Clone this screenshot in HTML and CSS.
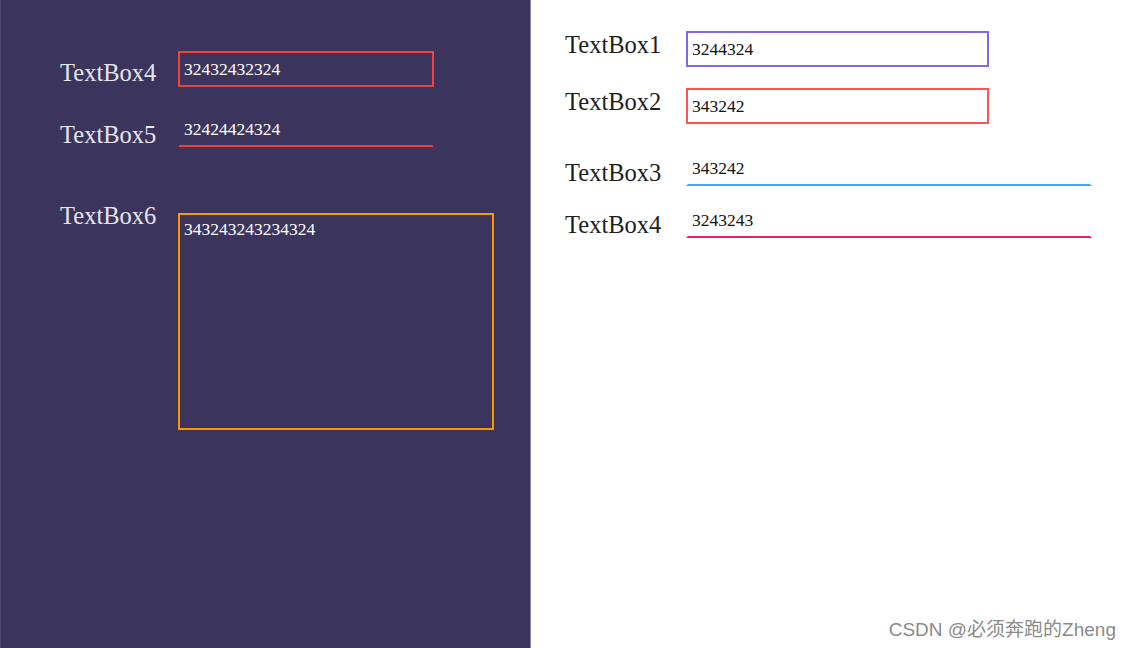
FILE: index.html
```html
<!DOCTYPE html>
<html lang="zh-CN">
<head>
  <meta charset="UTF-8">
  <meta name="viewport" content="width=device-width, initial-scale=1.0">
  <title>TextBox</title>
  <link rel="stylesheet" href="styles.css">
</head>
<body>
  <div class="page">

    <!-- 深色面板 -->
    <div class="panel dark">
      <div class="row row-a">
        <span class="label">TextBox4</span>
        <input class="field box red" type="text" value="32432432324">
      </div>
      <div class="row row-b">
        <span class="label">TextBox5</span>
        <input class="field line red" type="text" value="32424424324">
      </div>
      <div class="row row-c">
        <span class="label">TextBox6</span>
        <textarea class="field area orange">343243243234324</textarea>
      </div>
    </div>

    <!-- 白色面板 -->
    <div class="panel light">
      <div class="row row-1">
        <span class="label">TextBox1</span>
        <input class="field box purple" type="text" value="3244324">
      </div>
      <div class="row row-2">
        <span class="label">TextBox2</span>
        <input class="field box coral" type="text" value="343242">
      </div>
      <div class="row row-3">
        <span class="label">TextBox3</span>
        <input class="field line wide blue" type="text" value="343242">
      </div>
      <div class="row row-4">
        <span class="label">TextBox4</span>
        <input class="field line wide pink" type="text" value="3243243">
      </div>
    </div>

    <div class="watermark">CSDN @必须奔跑的Zheng</div>
  </div>
</body>
</html>
```

FILE: styles.css
```css
body {
  margin: 0;
  background: #fff;
  font-family: "Liberation Serif", "Noto Sans CJK SC", serif;
}

.page {
  position: relative;
  display: flex;
  height: 648px;
  overflow: hidden;
}

.panel {
  box-sizing: border-box;
}

.dark {
  width: 531px;
  flex: none;
  background: #3b355d;
  border-left: 1px solid #4d4770;
  border-right: 1px solid #8d89a6;
  padding: 51px 0 0 59px;
}

.light {
  flex: 1;
  padding: 31px 0 0 34px;
}

.row {
  display: flex;
  align-items: flex-start;
}

.dark .row {
  gap: 20px;
}

.light .row {
  gap: 23px;
}

.label {
  flex: none;
  width: 98px;
  font-size: 24.5px;
  line-height: 28px;
  white-space: nowrap;
}

.dark .label {
  color: #e6e4f0;
}

.light .label {
  color: #1e1e1e;
}

/* 行间距 */
.row-a .label { margin-top: 8px; }
.row-b { margin-top: 24px; }
.row-b .label { margin-top: 10px; }
.row-c { margin-top: 53px; }
.row-c .area { margin-top: 11px; }

.row-2 { margin-top: 21px; }
.row-3 { margin-top: 26px; }
.row-3 .label { margin-top: 9px; }
.row-4 { margin-top: 15px; }
.row-4 .label { margin-top: 9px; }

/* 输入框 */
.field {
  box-sizing: border-box;
  margin: 0;
  font-family: "Liberation Serif", serif;
  font-size: 17.5px;
  background: transparent;
  border: 2px solid transparent;
  outline: none;
}

.dark .field {
  color: #fff;
}

.light .field {
  color: #111;
}

.box {
  width: 256px;
  height: 36px;
  padding: 0 4px;
}

.light .box {
  width: 303px;
}

.line {
  width: 256px;
  height: 36px;
  padding: 0 4px;
  border-top-color: transparent;
  border-left-color: transparent;
  border-right-color: transparent;
}

.line.wide {
  width: 406px;
}

.area {
  width: 316px;
  height: 217px;
  padding: 4px;
  line-height: 20px;
  resize: none;
}

.box.red { border-color: #f44336; }
.line.red { border-bottom-color: #f44336; }
.area.orange { border-color: #ff9800; }
.box.purple { border-color: #7b68ee; }
.box.coral { border-color: #ff5252; }
.line.blue { border-bottom-color: #42a5f5; }
.line.pink { border-bottom-color: #e91e63; }

/* 水印 */
.watermark {
  position: absolute;
  right: 15px;
  bottom: 7px;
  font-family: "Liberation Sans", "Noto Sans CJK SC", sans-serif;
  font-size: 19px;
  color: #8a8a8a;
  white-space: nowrap;
}
```
